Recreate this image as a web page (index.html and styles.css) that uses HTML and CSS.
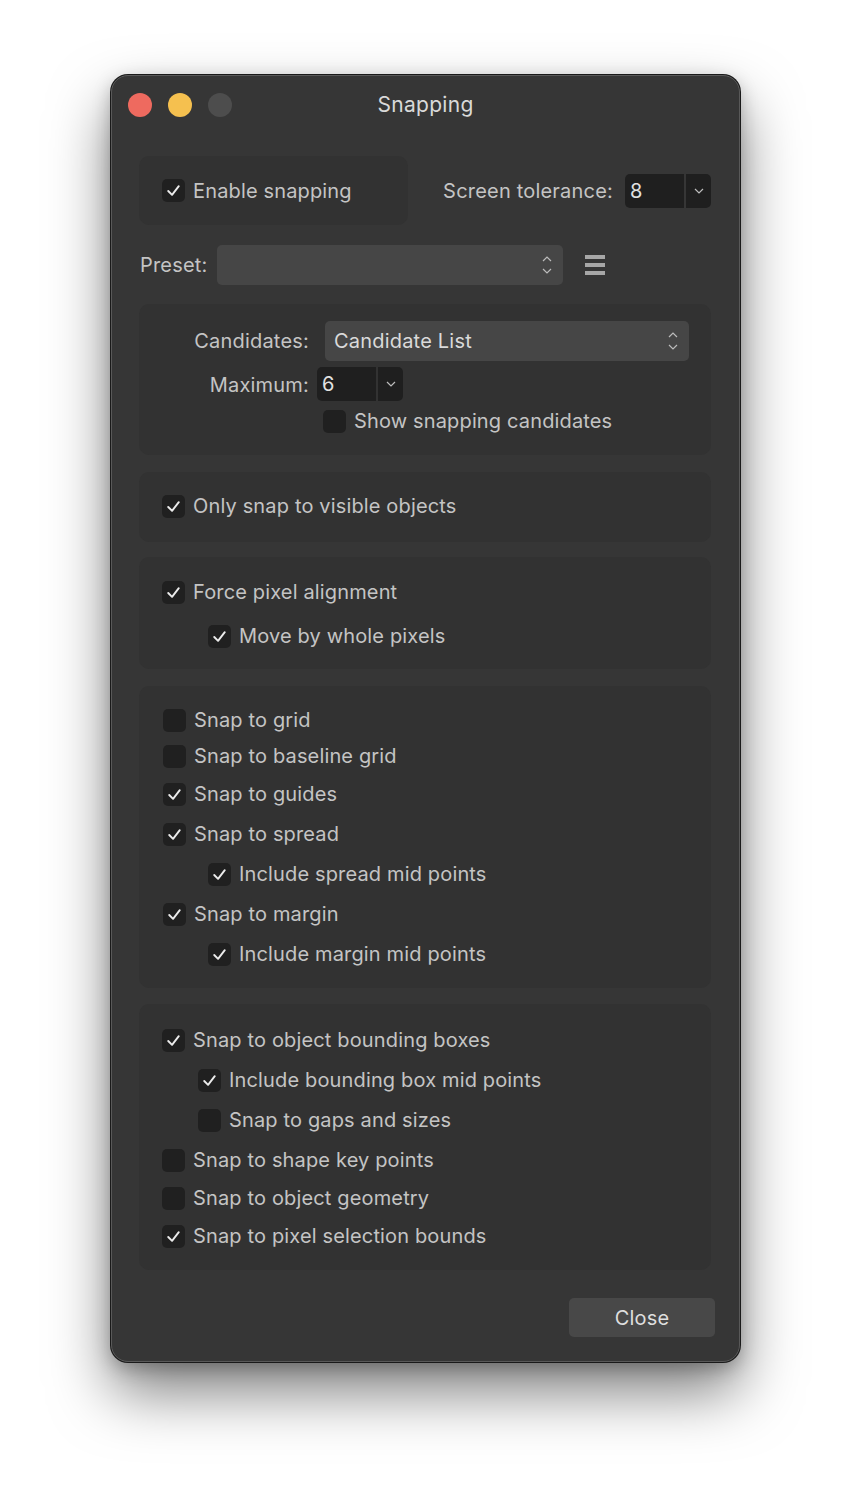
FILE: index.html
```html
<!DOCTYPE html>
<html>
<head>
<meta charset="utf-8">
<link rel="stylesheet" href="styles.css">
</head>
<body>
<div class="window">
  <div class="titlebar">
    <div class="lights">
      <span class="light red"></span>
      <span class="light yellow"></span>
      <span class="light gray"></span>
    </div>
    <div class="title">Snapping</div>
    <div></div>
  </div>
  <div class="content">
    <div class="row-top">
      <div class="panel panel-enable">
        <label class="check"><span class="cb on"><svg viewBox="0 0 24 24"><polyline points="6.5,12.5 10.5,16.5 17.5,7.5"/></svg></span>Enable snapping</label>
      </div>
      <div class="tolerance">
        <span class="lbl">Screen tolerance:</span>
        <div class="spinner"><span class="num">8</span><span class="arrow"><svg viewBox="0 0 12 8"><polyline points="2,2 6,6 10,2"/></svg></span></div>
      </div>
    </div>

    <div class="row-preset">
      <span class="lbl">Preset:</span>
      <div class="popup popup-preset"><span></span><svg class="updown" viewBox="0 0 12 24"><polyline points="2,8 6,4 10,8"/><polyline points="2,16 6,20 10,16"/></svg></div>
      <div class="hamburger"><span></span><span></span><span></span></div>
    </div>

    <div class="panel panel-cand">
      <div class="cand-grid">
        <span class="lbl r">Candidates:</span>
        <div class="popup popup-cand"><span>Candidate List</span><svg class="updown" viewBox="0 0 12 24"><polyline points="2,8 6,4 10,8"/><polyline points="2,16 6,20 10,16"/></svg></div>
        <span class="lbl r lbl-max">Maximum:</span>
        <div class="spinner spinner-max"><span class="num">6</span><span class="arrow"><svg viewBox="0 0 12 8"><polyline points="2,2 6,6 10,2"/></svg></span></div>
        <span></span>
        <label class="check show-cand"><span class="cb"></span>Show snapping candidates</label>
      </div>
    </div>

    <div class="panel panel-visible">
      <label class="check"><span class="cb on"><svg viewBox="0 0 24 24"><polyline points="6.5,12.5 10.5,16.5 17.5,7.5"/></svg></span>Only snap to visible objects</label>
    </div>

    <div class="panel panel-pixel">
      <label class="check"><span class="cb on"><svg viewBox="0 0 24 24"><polyline points="6.5,12.5 10.5,16.5 17.5,7.5"/></svg></span>Force pixel alignment</label>
      <label class="check sub1 g20"><span class="cb on"><svg viewBox="0 0 24 24"><polyline points="6.5,12.5 10.5,16.5 17.5,7.5"/></svg></span>Move by whole pixels</label>
    </div>

    <div class="panel panel-grid">
      <label class="check"><span class="cb"></span>Snap to grid</label>
      <label class="check g12"><span class="cb"></span>Snap to baseline grid</label>
      <label class="check g14"><span class="cb on"><svg viewBox="0 0 24 24"><polyline points="6.5,12.5 10.5,16.5 17.5,7.5"/></svg></span>Snap to guides</label>
      <label class="check g16"><span class="cb on"><svg viewBox="0 0 24 24"><polyline points="6.5,12.5 10.5,16.5 17.5,7.5"/></svg></span>Snap to spread</label>
      <label class="check sub2 g16"><span class="cb on"><svg viewBox="0 0 24 24"><polyline points="6.5,12.5 10.5,16.5 17.5,7.5"/></svg></span>Include spread mid points</label>
      <label class="check g16"><span class="cb on"><svg viewBox="0 0 24 24"><polyline points="6.5,12.5 10.5,16.5 17.5,7.5"/></svg></span>Snap to margin</label>
      <label class="check sub2 g16"><span class="cb on"><svg viewBox="0 0 24 24"><polyline points="6.5,12.5 10.5,16.5 17.5,7.5"/></svg></span>Include margin mid points</label>
    </div>

    <div class="panel panel-bounds">
      <label class="check"><span class="cb on"><svg viewBox="0 0 24 24"><polyline points="6.5,12.5 10.5,16.5 17.5,7.5"/></svg></span>Snap to object bounding boxes</label>
      <label class="check sub3 g16"><span class="cb on"><svg viewBox="0 0 24 24"><polyline points="6.5,12.5 10.5,16.5 17.5,7.5"/></svg></span>Include bounding box mid points</label>
      <label class="check sub3 g16"><span class="cb"></span>Snap to gaps and sizes</label>
      <label class="check g16"><span class="cb"></span>Snap to shape key points</label>
      <label class="check g14"><span class="cb"></span>Snap to object geometry</label>
      <label class="check g14"><span class="cb on"><svg viewBox="0 0 24 24"><polyline points="6.5,12.5 10.5,16.5 17.5,7.5"/></svg></span>Snap to pixel selection bounds</label>
    </div>

    <div class="footer">
      <button class="btn">Close</button>
    </div>
  </div>
</div>
</body>
</html>
```

FILE: styles.css
```css
* { box-sizing: border-box; }
html, body { margin: 0; padding: 0; }
body {
  background: #ffffff;
  width: 852px;
  height: 1510px;
  overflow: hidden;
  font-family: "Inter", "Noto Sans", sans-serif;
  font-size: 20px;
  color: #c4c4c4;
}
.window {
  margin: 75px 0 0 111px;
  width: 629px;
  height: 1287px;
  background: #363636;
  border: 1px solid #595959;
  border-radius: 17px;
  box-shadow: 0 0 0 1px #1a1a1a, 0 30px 60px rgba(0,0,0,0.5), 0 6px 18px rgba(0,0,0,0.25);
  display: flex;
  flex-direction: column;
}
.titlebar {
  height: 57px;
  display: grid;
  grid-template-columns: 1fr auto 1fr;
  align-items: center;
}
.lights { display: flex; gap: 16px; padding-left: 16px; }
.light { width: 24px; height: 24px; border-radius: 50%; display: block; }
.red { background: #ee6a5f; }
.yellow { background: #f5c04f; }
.gray { background: #4d4d4d; }
.title { font-size: 21px; color: #d9d9d9; letter-spacing: 0.3px; padding-bottom: 1px; }

.content {
  padding: 23px 28px 0 27px;
  display: flex;
  flex-direction: column;
}
.panel {
  background: #323232;
  border-radius: 10px;
}
.check {
  display: flex;
  align-items: center;
  height: 24px;
  gap: 8px;
  letter-spacing: 0.15px;
  white-space: nowrap;
}
.cb {
  width: 23px;
  height: 23px;
  border-radius: 5px;
  background: #202020;
  flex: none;
  display: flex;
  align-items: center;
  justify-content: center;
}
.cb svg { width: 23px; height: 23px; }
.cb svg polyline { fill: none; stroke: #ececec; stroke-width: 2; stroke-linecap: round; stroke-linejoin: round; }

.row-top { display: flex; align-items: center; justify-content: space-between; }
.panel-enable { width: 269px; height: 69px; display: flex; align-items: center; padding-left: 23px; }
.tolerance { display: flex; align-items: center; gap: 12px; }
.lbl { letter-spacing: 0.2px; white-space: nowrap; }
.spinner { display: flex; height: 34px; gap: 2px; }
.spinner .num {
  width: 59px; background: #1f1f1f; border-radius: 5px 0 0 5px;
  color: #e2e2e2; font-size: 20px; padding-left: 5px; display: flex; align-items: center;
}
.spinner .arrow {
  width: 25px; background: #1f1f1f; border-radius: 0 5px 5px 0;
  display: flex; align-items: center; justify-content: center;
}
.spinner .arrow svg { width: 12px; height: 8px; }
.spinner .arrow svg polyline { fill: none; stroke: #bdbdbd; stroke-width: 1.2; }

.row-preset { display: flex; align-items: center; margin-top: 20px; height: 40px; padding-left: 1px; }
.row-preset .lbl { width: 77px; }
.popup {
  background: #464646; border-radius: 5px; height: 40px;
  display: flex; align-items: center; justify-content: space-between;
  padding: 0 10px 0 9px;
}
.popup span { color: #dadada; font-size: 20px; letter-spacing: 0.2px; }
.popup-preset { width: 346px; }
.updown { width: 12px; height: 24px; }
.updown polyline { fill: none; stroke: #bcbcbc; stroke-width: 1.2; }
.hamburger { margin-left: 22px; width: 20px; display: flex; flex-direction: column; gap: 4px; }
.hamburger span { height: 4px; background: #a7a7a7; display: block; }

.panel-cand { margin-top: 19px; height: 151px; padding-top: 17px; }
.cand-grid {
  display: grid;
  grid-template-columns: 170px 1fr;
  column-gap: 8px;
  align-items: center;
  padding-right: 22px;
}
.lbl.r { text-align: right; }
.lbl-max { padding-top: 8px; }
.popup-cand { margin-left: 8px; }
.spinner-max { margin-top: 6px; width: 86px; }
.spinner-max .num { width: 59px; }
.show-cand { margin-top: 8px; margin-left: 6px; }

.panel-visible { margin-top: 17px; height: 70px; padding: 22px 0 0 23px; }
.panel-pixel { margin-top: 15px; height: 112px; padding: 23px 0 0 23px; }
.panel-grid { margin-top: 17px; height: 302px; padding: 22px 0 0 24px; }
.panel-bounds { margin-top: 16px; height: 266px; padding: 24px 0 0 23px; }

.g12 { margin-top: 12px; }
.g14 { margin-top: 14px; }
.g16 { margin-top: 16px; }
.g20 { margin-top: 20px; }
.sub1 { margin-left: 46px; }
.sub2 { margin-left: 45px; }
.sub3 { margin-left: 36px; }

.footer { display: flex; justify-content: flex-end; margin-top: 28px; margin-right: -4px; }
.btn {
  width: 146px; height: 39px; border: none; border-radius: 5px;
  background: #484848; color: #dedede; font-family: inherit; font-size: 20px;
  letter-spacing: 0.2px;
}
```
